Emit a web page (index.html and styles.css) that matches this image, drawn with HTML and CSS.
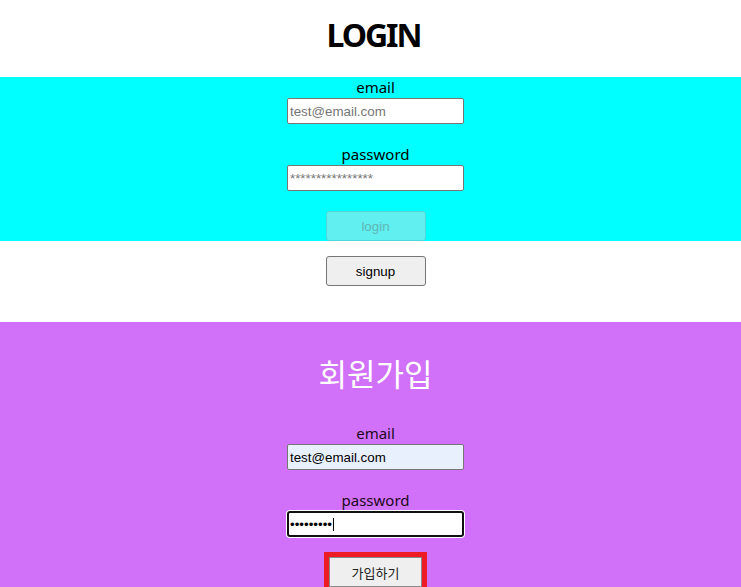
FILE: index.html
```html
<!DOCTYPE html>
<html lang="ko">
<head>
<meta charset="utf-8">
<title>LOGIN</title>
<link rel="stylesheet" href="styles.css">
</head>
<body>
<header class="top">
  <h1 class="title">LOGIN</h1>
</header>
<section class="login-form">
  <label class="field-label" for="email">email</label>
  <input class="field" id="email" type="text" placeholder="test@email.com">
  <label class="field-label gap" for="pw">password</label>
  <input class="field" id="pw" type="password" placeholder="****************">
  <button class="btn btn-disabled" type="button">login</button>
</section>
<section class="signup-area">
  <button class="btn" type="button">signup</button>
</section>
<section class="join">
  <h2 class="join-title">회원가입</h2>
  <label class="field-label" for="jemail">email</label>
  <input class="field autofill" id="jemail" type="text" value="test@email.com">
  <label class="field-label gap" for="jpw">password</label>
  <span class="field-wrap">
    <input class="field focused" id="jpw" type="password" value="123456789">
    <span class="caret"></span>
  </span>
  <button class="btn btn-join" type="button">가입하기</button>
</section>
</body>
</html>
```
FILE: styles.css
```css
html, body {
  margin: 0;
  padding: 0;
  background: #ffffff;
  overflow: hidden;
  height: 587px;
}
body {
  font-family: "Noto Sans", "Noto Sans CJK KR", sans-serif;
}
.top {
  height: 77px;
  box-sizing: border-box;
  padding: 0 0 8px 4px;
  display: flex;
  align-items: center;
  justify-content: center;
}
.title {
  margin: 0;
  font-family: "Noto Sans", sans-serif;
  font-weight: 700;
  font-size: 32px;
  line-height: 44px;
  letter-spacing: -2px;
  color: #000;
  padding-left: 2px;
}
.login-form {
  background: #00ffff;
  display: flex;
  flex-direction: column;
  align-items: center;
  height: 164px;
  box-sizing: border-box;
  padding-left: 10px;
}
.field-label {
  display: block;
  font-size: 15px;
  line-height: 21px;
  color: #000;
  text-align: center;
}
.gap {
  margin-top: 20px;
}
.field {
  box-sizing: border-box;
  width: 177px;
  height: 26px;
  margin: 0;
  padding: 1px 2px;
  border: 1px solid #767676;
  border-radius: 2px;
  background: #fff;
  font-family: "Liberation Sans", Arial, sans-serif;
  font-size: 13.33px;
  color: #000;
  outline: none;
}
.field::placeholder {
  color: #757575;
}
.btn {
  box-sizing: border-box;
  width: 100px;
  height: 30px;
  margin: 0;
  padding: 0;
  border: 1px solid #767676;
  border-radius: 3px;
  background: #efefef;
  font-family: "Liberation Sans", Arial, sans-serif;
  font-size: 13.33px;
  color: #000;
}
.btn-disabled {
  margin-top: 20px;
  background: #62efef;
  border-color: #50d8d8;
  color: #5fb6b6;
}
.signup-area {
  padding: 15px 0 36px 10px;
  display: flex;
  justify-content: center;
}
.join {
  background: #d171f9;
  display: flex;
  flex-direction: column;
  align-items: center;
  padding: 29px 0 0 10px;
  height: 265px;
  box-sizing: border-box;
}
.join-title {
  margin: 0 0 28px;
  font-family: "Noto Sans CJK KR", sans-serif;
  font-weight: 400;
  font-size: 31px;
  line-height: 44px;
  color: #fff;
}
.join .field-label {
  color: #1a0a20;
}
.autofill {
  background: #e8f0fe;
  color: #000;
}
.field-wrap {
  position: relative;
  display: block;
}
.focused {
  border: 2px solid #101010;
  border-radius: 3px;
  padding: 1px 1px;
  box-shadow: 0 0 0 1px #ffffff;
}
.caret {
  position: absolute;
  left: 46px;
  top: 7px;
  width: 1px;
  height: 13px;
  background: #000;
}
.btn-join {
  width: 93px;
  margin-top: 20px;
  border-radius: 0;
  outline: 5px solid #ed1c24;
  font-family: "Noto Sans CJK KR", sans-serif;
  font-size: 13px;
  color: #222;
  border-color: #8a8a8a;
  flex-shrink: 0;
}
```
